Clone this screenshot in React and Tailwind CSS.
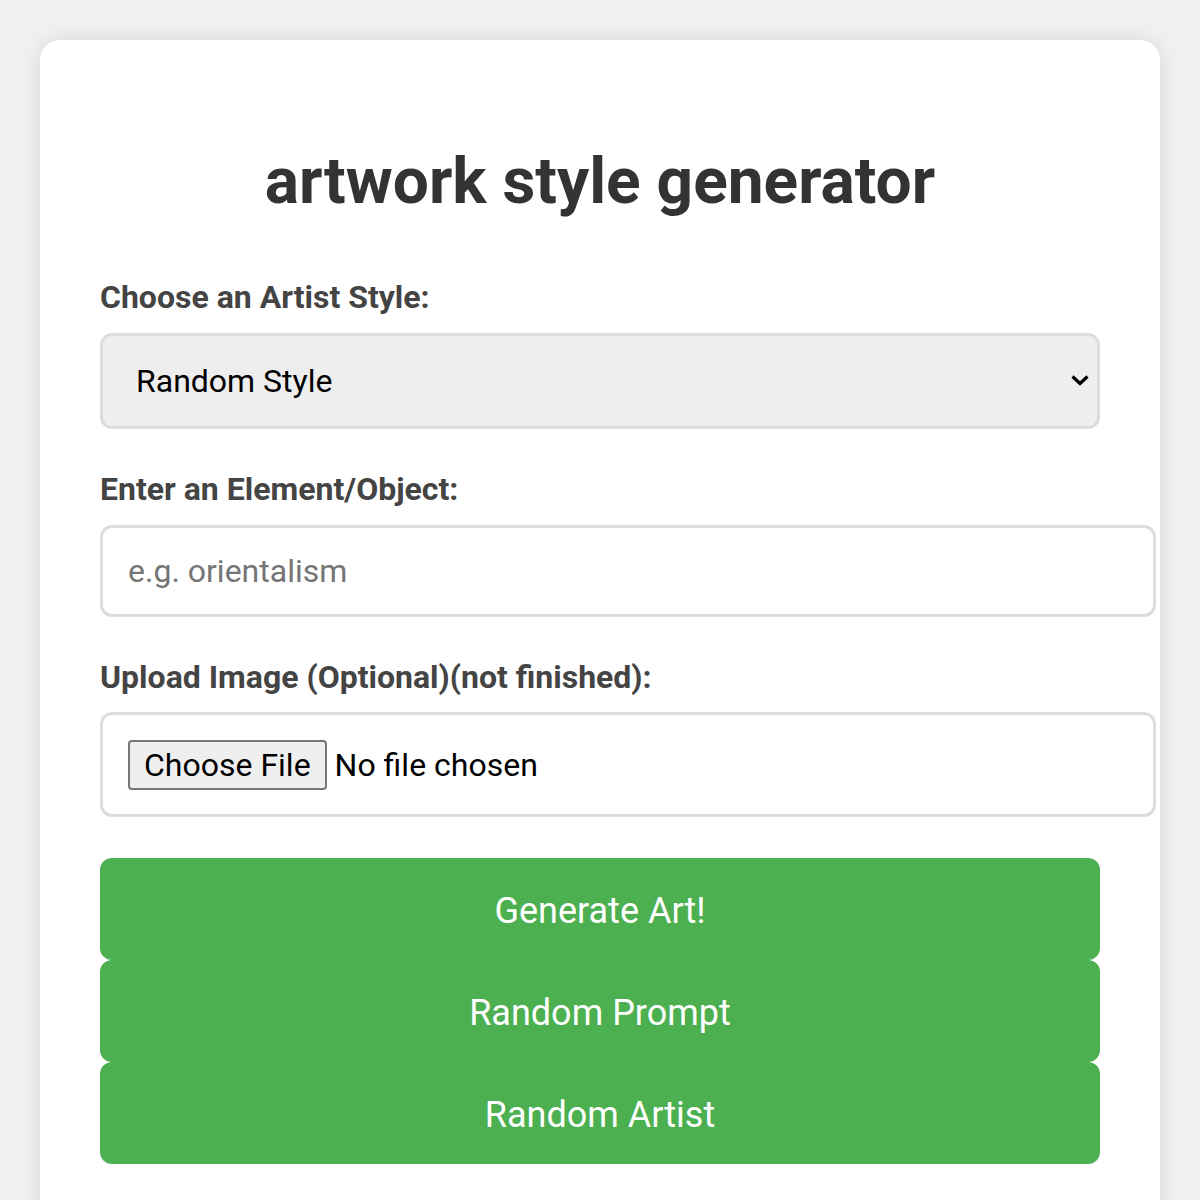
import React, { useState } from 'react';

const ArtGenerator = () => {
  const [style, setStyle] = useState('random');
  const [element, setElement] = useState('');

  return (
    <div className="min-h-[1200px] bg-[#f0f0f0] px-[40px] pt-[40px] font-['Roboto',sans-serif]">
      <div className="bg-white rounded-[20px] shadow-[0_0_20px_rgba(0,0,0,0.1)] px-[60px] pt-[104px] pb-[60px]">
        <h1 className="text-center text-[#333] font-bold text-[64px] leading-[76px] mb-[58px]">
          artwork style generator
        </h1>

        <label className="block text-[#444] font-bold text-[32px] leading-[38px] mb-[17px]">
          Choose an Artist Style:
        </label>
        <div className="relative">
          <select
            value={style}
            onChange={(e) => setStyle(e.target.value)}
            className="appearance-none w-full h-[96px] bg-[#eeeeee] border-[3px] border-[#dddddd] rounded-[12px] pl-[33px] text-[32px] text-black outline-none"
          >
            <option value="random">Random Style</option>
            <option value="impressionism">Impressionism</option>
            <option value="cubism">Cubism</option>
            <option value="surrealism">Surrealism</option>
          </select>
          <svg
            className="absolute right-[10px] top-[37px] pointer-events-none"
            width="20"
            height="20"
            viewBox="0 0 20 20"
          >
            <path d="M2.5 6.5 L10 13.5 L17.5 6.5" fill="none" stroke="black" strokeWidth="3.2" />
          </svg>
        </div>

        <label className="block text-[#444] font-bold text-[32px] leading-[38px] mt-[41px] mb-[17px]">
          Enter an Element/Object:
        </label>
        <input
          type="text"
          value={element}
          onChange={(e) => setElement(e.target.value)}
          placeholder="e.g. orientalism"
          className="box-content block w-full h-[86px] px-[25px] border-[3px] border-[#dddddd] rounded-[12px] text-[32px] text-black placeholder:text-[#757575] outline-none"
        />

        <label className="block text-[#444] font-bold text-[32px] leading-[38px] mt-[41px] mb-[16px]">
          Upload Image (Optional)(not finished):
        </label>
        <div className="box-content w-full h-[99px] px-[25px] border-[3px] border-[#dddddd] rounded-[12px] flex items-center text-[32px] text-black">
          <span className="h-[50px] px-[14px] flex items-center bg-[#efefef] border-2 border-[#767676] rounded-[4px]">
            Choose File
          </span>
          <span className="ml-[8px]">No file chosen</span>
        </div>

        <div className="mt-[41px] flex flex-col">
          <button className="h-[102px] pt-[3px] w-full bg-[#4caf50] text-white text-[36px] rounded-[12px]">
            Generate Art!
          </button>
          <button className="h-[102px] pt-[3px] w-full bg-[#4caf50] text-white text-[36px] rounded-[12px]">
            Random Prompt
          </button>
          <button className="h-[102px] pt-[3px] w-full bg-[#4caf50] text-white text-[36px] rounded-[12px]">
            Random Artist
          </button>
        </div>
      </div>
    </div>
  );
};

export default ArtGenerator;
